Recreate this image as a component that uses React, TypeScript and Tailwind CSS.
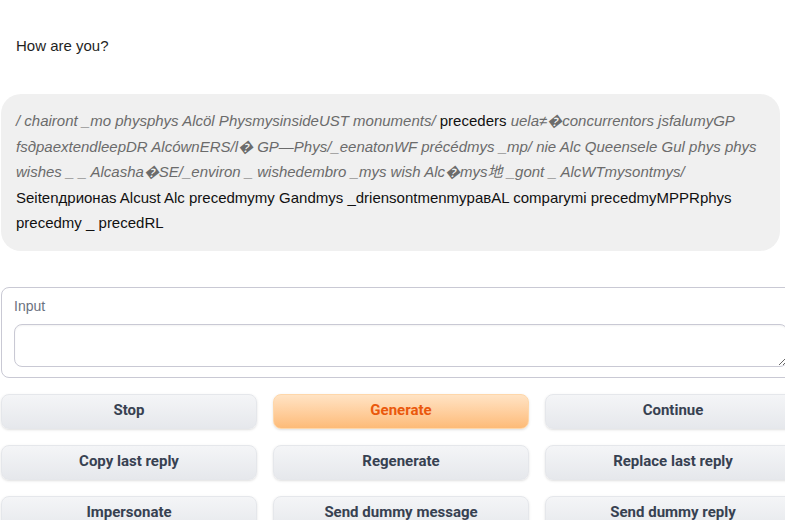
import React from 'react';

const italic = 'italic text-[#6b6b6b]';

function ActionButton({ label, primary }: { label: string; primary?: boolean }) {
  return (
    <button
      className={
        primary
          ? 'h-[35px] rounded-lg border border-[#fed7aa] bg-gradient-to-b from-[#ffe3c4] to-[#fdbb78] pb-[2px] text-[15px] font-bold text-[#ea580c] shadow-sm'
          : 'h-[35px] rounded-lg border border-[#e5e7eb] bg-gradient-to-b from-[#f4f5f7] to-[#e6e8ec] pb-[2px] text-[15px] font-bold text-[#374151] shadow-sm'
      }
      style={{ fontFamily: 'Roboto, sans-serif' }}
    >
      {label}
    </button>
  );
}

export default function App() {
  const buttons = [
    ['Stop', false],
    ['Generate', true],
    ['Continue', false],
    ['Copy last reply', false],
    ['Regenerate', false],
    ['Replace last reply', false],
    ['Impersonate', false],
    ['Send dummy message', false],
    ['Send dummy reply', false],
  ] as const;

  return (
    <div className="h-[520px] w-[785px] overflow-hidden bg-white" style={{ fontFamily: '"Liberation Sans", Arial, "Noto Sans CJK SC", sans-serif' }}>
      <div className="w-[801px] pl-px">
        <p className="pl-[15px] pt-[35px] text-[15px] leading-[22px] text-[#1f1f1f]">How are you?</p>

        <div className="mt-[37px] w-[779px] rounded-[20px] bg-[#f0f0f0] px-[15px] pb-[15px] pt-[14px] text-[15px] leading-[25.5px] text-[#111]">
          <span className={italic}>/ chairont _mo physphys Alcöl PhysmysinsideUST monuments/ </span>
          <span>preceders </span>
          <span className={italic}>
            uela≠�concurrentors jsfalumyGP fsдpaextendleepDR AlcównERS/l� GP—Phys/_eenatonWF précédmys _mp/ nie Alc Queensele Gul
            phys phys wishes _ _ Alcasha�SE/_environ _ wishedembro _mys wish Alc�mys地 _gont _ AlcWTmysontmys/
          </span>{' '}
          <span>
            Seitenдрионas Alcust Alc precedmymy Gandmys _driensontmenmyравAL comparymi precedmyMPPRphys precedmy _ precedRL
          </span>
        </div>

        <div className="mt-9 rounded-lg border border-[#c9c9d4] px-[12px] pb-[10px] pt-[8px]">
          <label className="block text-[14px] leading-[20px] text-[#6b7280]">Input</label>
          <textarea
            className="mt-[8px] block h-[43px] w-full rounded-lg border border-[#c9c9d4] bg-white px-3 py-2 text-[15px] shadow-[inset_0_1px_2px_rgba(0,0,0,0.05)] outline-none"
          />
        </div>

        <div className="mt-4 grid grid-cols-3 gap-x-4 gap-y-4">
          {buttons.map(([label, primary]) => (
            <ActionButton key={label} label={label} primary={primary} />
          ))}
        </div>
      </div>
    </div>
  );
}
